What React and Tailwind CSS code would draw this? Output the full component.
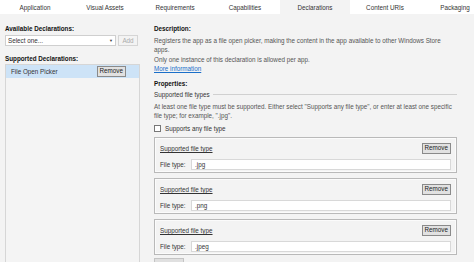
import React from "react";

const tabs = [
  "Application",
  "Visual Assets",
  "Requirements",
  "Capabilities",
  "Declarations",
  "Content URIs",
  "Packaging",
];

const fileTypes = [".jpg", ".png", ".jpeg"];

const SmallButton = ({ children, className = "" }) => (
  <button
    className={`h-[11px] px-[2px] border border-[#8a8a8a] bg-[#e1e1e1] text-[#222] leading-none text-[6.3px] ${className}`}
  >
    {children}
  </button>
);

const FileTypeBox = ({ value }) => (
  <div className="border border-[#b9b9b9] bg-[#f3f3f3] h-[36px] px-[5px] pt-[5px] shadow-[inset_0_0_0_1px_#fbfbfb]">
    <div className="flex items-center justify-between h-[11px]">
      <span className="underline text-[#333]">Supported file type</span>
      <SmallButton>Remove</SmallButton>
    </div>
    <div className="flex items-center mt-[5px] h-[11px]">
      <span className="w-[31px] text-[#333]">File type:</span>
      <div className="flex-1 h-[11px] bg-white border border-[#d8d8d8] px-[3px] flex items-center text-[#333]">
        {value}
      </div>
    </div>
  </div>
);

const App = () => {
  return (
    <div
      className="w-[474px] h-[262px] overflow-hidden bg-[#f3f3f3] text-[6.3px] leading-[9px] text-[#555]"
      style={{ fontFamily: '"Liberation Sans", Arial, sans-serif' }}
    >
      {/* tab strip */}
      <div className="flex h-[14px] bg-white">
        {tabs.map((tab) => (
          <div
            key={tab}
            className={`w-[70px] shrink-0 flex items-center justify-center text-[#333] ${
              tab === "Declarations" ? "bg-[#f3f3f3]" : ""
            }`}
          >
            {tab}
          </div>
        ))}
      </div>

      <div className="flex px-[5px] pt-[10px]">
        {/* left column */}
        <div className="w-[135px] shrink-0 flex flex-col">
          <div className="font-bold text-[#111]">Available Declarations:</div>
          <div className="flex items-center mt-[2px] gap-[2px]">
            <div className="w-[111px] h-[11px] bg-white border border-[#cfcfcf] flex items-center justify-between px-[2px] text-[#333]">
              <span>Select one...</span>
              <span className="text-[4px] text-[#444]">▼</span>
            </div>
            <div className="h-[11px] w-[20px] border border-[#d5d5d5] bg-[#f3f3f3] text-[#aaa] flex items-center justify-center">
              Add
            </div>
          </div>
          <div className="font-bold text-[#111] mt-[8px]">Supported Declarations:</div>
          <div className="mt-[1px] h-[200px] border border-[#d6d6d6] bg-[#f4f4f4]">
            <div className="h-[13px] bg-[#cde3f7] flex items-center justify-between pl-[5px] pr-[13px] text-[#333]">
              <span>File Open Picker</span>
              <SmallButton className="bg-[#dbe6ef]">Remove</SmallButton>
            </div>
          </div>
        </div>

        {/* right column */}
        <div className="flex-1 ml-[14px] mr-[12px] flex flex-col">
          <div className="font-bold text-[#111]">Description:</div>
          <p className="mt-[3px]">
            Registers the app as a file open picker, making the content in the app available to other Windows Store
            apps.
          </p>
          <p className="mt-[1px]">Only one instance of this declaration is allowed per app.</p>
          <a className="text-[#1a6fc9] underline">More information</a>

          <div className="font-bold text-[#111] mt-[6px]">Properties:</div>
          <div className="flex items-center mt-[2px]">
            <span className="text-[#333]">Supported file types</span>
            <div className="flex-1 ml-[3px] border-t border-[#d0d0d0]" />
          </div>
          <p className="mt-[3px]">
            At least one file type must be supported. Either select "Supports any file type", or enter at least one specific
            file type; for example, ".jpg".
          </p>
          <label className="flex items-center gap-[4px] mt-[4px] text-[#333]">
            <span className="w-[7px] h-[7px] border border-[#777] bg-white" />
            Supports any file type
          </label>

          <div className="flex flex-col gap-[5px] mt-[4px]">
            {fileTypes.map((t) => (
              <FileTypeBox key={t} value={t} />
            ))}
          </div>
          <div className="mt-[3px] w-[30px] h-[8px] bg-[#e0e0e0] border border-[#c4c4c4]" />
        </div>
      </div>
    </div>
  );
};

export default App;
